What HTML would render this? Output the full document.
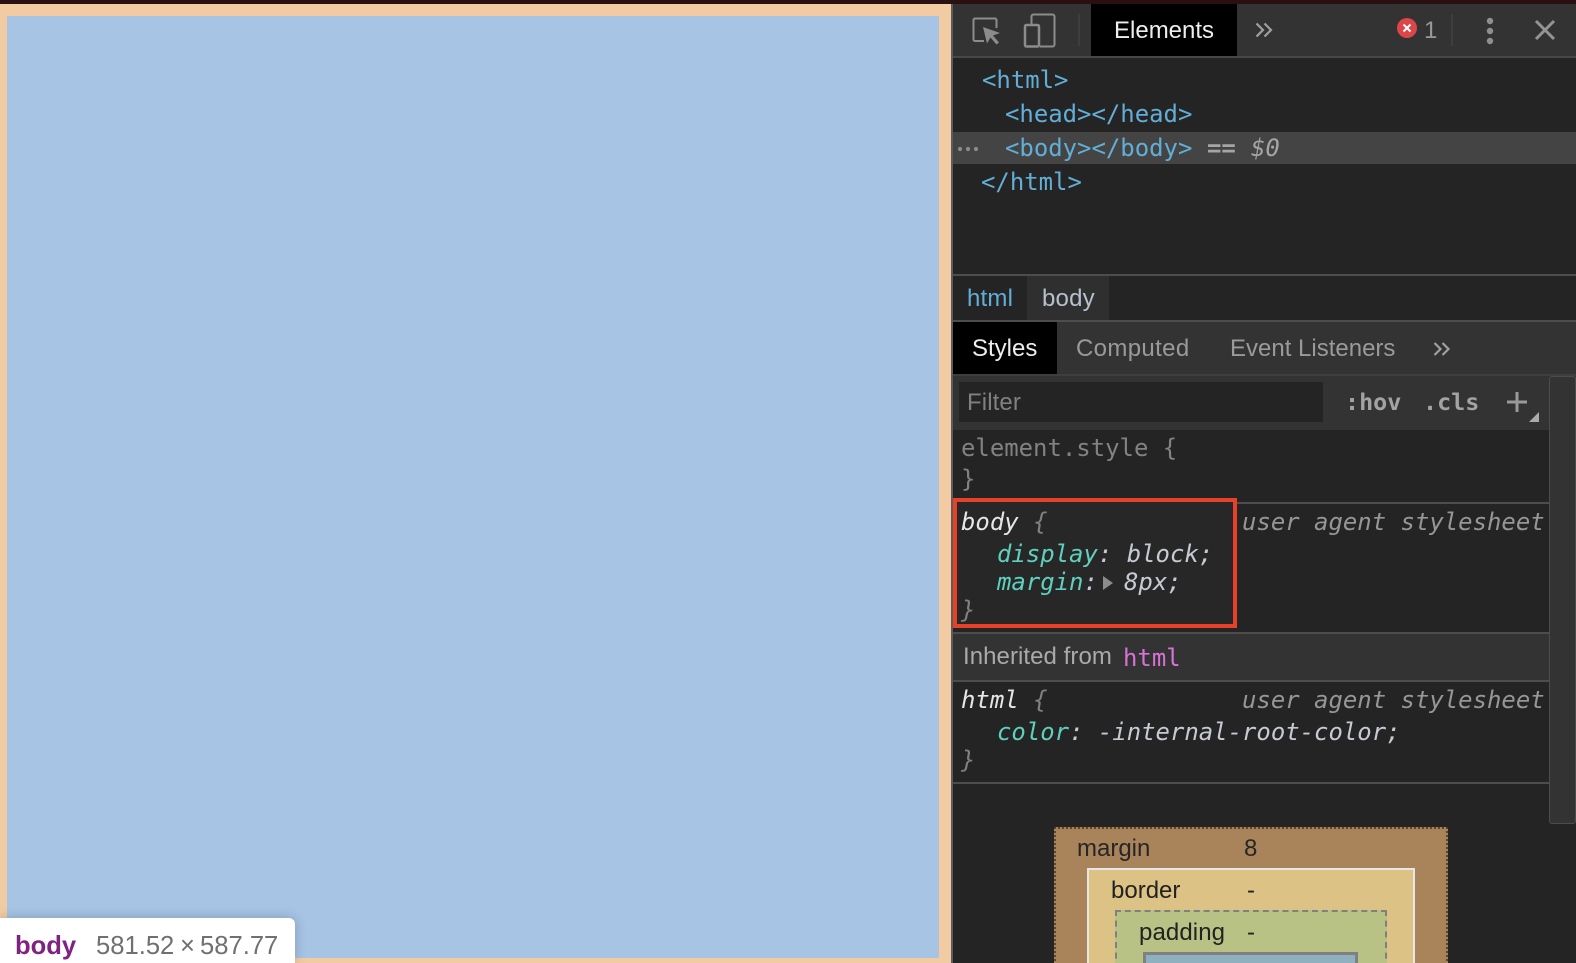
<!DOCTYPE html>
<html style="overflow:hidden;width:1576px;height:963px"><head><meta charset="utf-8"><style>
html,body{margin:0;padding:0}
body{width:1576px;height:963px;overflow:hidden;background:#f3cba3}
#r{position:absolute;left:0;top:0;width:1576px;height:963px;overflow:hidden;background:#f3cba3}
#r div,#r svg{position:absolute}
.t{position:absolute;white-space:pre;line-height:30px;height:30px;font-family:"Liberation Sans",sans-serif;font-size:24px;letter-spacing:0}
.m{font-family:"DejaVu Sans Mono","Liberation Mono",monospace;font-size:23.95px}
.i{font-style:italic}
.tag{color:#62aed6}
.g{color:#8a8a8a}
.v{color:#c6cbd3}
.p{color:#5fd0bd}
.ln{background:#4d4d4d;height:2px;left:953px;right:0}
</style></head><body><div id="r">
<div style="left:0;top:0;width:1576px;height:4px;background:#2b1013"></div>
<div style="left:7px;top:16px;width:932px;height:942px;background:#a7c4e5"></div>

<div style="left:951px;top:4px;width:625px;height:959px;background:#242424"></div>
<div style="left:951px;top:4px;width:2px;height:959px;background:#5c5c5c"></div>

<div style="left:953px;top:4px;right:0;height:53px;background:#333"></div>
<div class="ln" style="top:56px;height:2px;background:#474747"></div>
<div style="left:1091px;top:4px;width:146px;height:52px;background:#000"></div>
<span class="t" style="left:1114px;top:16px;color:#eee">Elements</span>
<svg style="left:970px;top:14px" width="36" height="34" viewBox="0 0 36 34" fill="none"><path d="M14 27H5a1.500 1.500 0 0 1-1.500-1.500V6A1.500 1.500 0 0 1 5 4.500h20A1.500 1.500 0 0 1 26.500 6v8" stroke="#8c8c8c" stroke-width="2"/><path d="M13 13l17 6-7 2.500 6 7-2.500 2-6-7-3.500 6z" fill="#8c8c8c"/></svg>
<svg style="left:1023px;top:13px" width="34" height="35" viewBox="0 0 34 35" fill="none"><path d="M8.500 11V3.500a2 2 0 0 1 2-2h19a2 2 0 0 1 2 2v28a2 2 0 0 1-2 2H17" stroke="#8c8c8c" stroke-width="2"/><rect x="2" y="12" width="14" height="21.500" rx="1.500" stroke="#8c8c8c" stroke-width="2.500"/></svg>
<div style="left:1078px;top:14px;width:2px;height:32px;background:#3e3e3e"></div>
<svg style="left:1255px;top:21px" width="19" height="18" viewBox="0 0 19 18" fill="none" stroke="#a0a0a0" stroke-width="2.200"><path d="M1.500 2.500l6.500 6.500-6.500 6.500M9.500 2.500l6.500 6.500-6.500 6.500"/></svg>
<svg style="left:1396px;top:17px" width="22" height="22" viewBox="0 0 22 22"><circle cx="11" cy="11" r="10" fill="#dc4649"/><path d="M7.500 7.500l7 7M14.500 7.500l-7 7" stroke="#fff" stroke-width="2"/></svg>
<span class="t" style="left:1424px;top:16px;color:#999">1</span>
<div style="left:1451px;top:14px;width:2px;height:32px;background:#3e3e3e"></div>
<svg style="left:1483px;top:17px" width="14" height="28" viewBox="0 0 14 28" fill="#8f8f8f"><circle cx="7" cy="4" r="3.200"/><circle cx="7" cy="14" r="3.200"/><circle cx="7" cy="24" r="3.200"/></svg>
<svg style="left:1534px;top:19px" width="22" height="22" viewBox="0 0 22 22" fill="none" stroke="#949494" stroke-width="3"><path d="M2 2l18 18M20 2L2 20"/></svg>

<div style="left:953px;top:132px;right:0;height:32px;background:#444"></div>
<span class="t m tag" style="left:982px;top:65px">&lt;html&gt;</span>
<span class="t m tag" style="left:1005px;top:99px">&lt;head&gt;&lt;/head&gt;</span>
<span class="t m tag" style="left:1005px;top:133px">&lt;body&gt;&lt;/body&gt;</span>
<span class="t m g" style="left:1207px;top:133px;color:#a5a5a5;font-weight:bold">==</span>
<span class="t m i" style="left:1251px;top:133px;color:#a5a5a5">$0</span>
<svg style="left:957px;top:145px" width="22" height="8" viewBox="0 0 22 8" fill="#8c8c8c"><circle cx="3" cy="4" r="2.100"/><circle cx="11" cy="4" r="2.100"/><circle cx="19" cy="4" r="2.100"/></svg>
<span class="t m tag" style="left:981px;top:167px">&lt;/html&gt;</span>

<div class="ln" style="top:274px"></div>
<div style="left:1027px;top:276px;width:82px;height:44px;background:#2f2f2f"></div>
<span class="t tag" style="left:967px;top:284px;letter-spacing:.2px">html</span>
<span class="t" style="left:1042px;top:284px;color:#b6c0ce;letter-spacing:.2px">body</span>
<div class="ln" style="top:320px"></div>

<div style="left:953px;top:322px;right:0;height:108px;background:#333"></div>
<div style="left:953px;top:322px;width:104px;height:52px;background:#000"></div>
<div class="ln" style="top:374px;height:2px;background:#3e3e3e"></div>
<span class="t" style="left:972px;top:334px;color:#eee">Styles</span>
<span class="t" style="left:1076px;top:334px;color:#9a9a9a;letter-spacing:.35px">Computed</span>
<span class="t" style="left:1230px;top:334px;color:#9a9a9a">Event Listeners</span>
<svg style="left:1433px;top:340px" width="18" height="18" viewBox="0 0 18 18" fill="none" stroke="#a0a0a0" stroke-width="2.200"><path d="M1.500 3l6 6-6 6M9.500 3l6 6-6 6"/></svg>
<div style="left:959px;top:382px;width:364px;height:40px;background:#242424"></div>
<span class="t" style="left:967px;top:388px;color:#808080;letter-spacing:.1px">Filter</span>
<span class="t m" style="left:1345px;top:387px;color:#a3a3a3;font-weight:bold;font-size:23.4px">:hov</span>
<span class="t m" style="left:1423px;top:387px;color:#a3a3a3;font-weight:bold;font-size:23.4px">.cls</span>
<svg style="left:1506px;top:391px" width="22" height="22" viewBox="0 0 22 22"><path d="M11 1v20M1 11h20" stroke="#999" stroke-width="3"/></svg>
<svg style="left:1529px;top:412px" width="10" height="10" viewBox="0 0 10 10"><path d="M10 0v10H0z" fill="#aaa"/></svg>

<div style="left:1549px;top:376px;width:27px;height:448px;background:#333;border:1px solid #4c4c4c;box-sizing:border-box;border-radius:3px"></div>

<span class="t m" style="left:961px;top:433px;color:#828282">element.style {</span>
<span class="t m" style="left:961px;top:464px;color:#828282">}</span>
<div style="left:953px;top:502px;width:596px;height:2px;background:#4d4d4d"></div>

<div style="left:953px;top:498px;width:284px;height:130px;box-sizing:border-box;border:4px solid #e8412a;background:#272727"></div>
<span class="t m i" style="left:961px;top:507px;color:#e6e6e6">body <span style="color:#808080">{</span></span>
<span class="t m i" style="left:997px;top:539px"><span class="p">display</span><span class="v">: block;</span></span>
<span class="t m i p" style="left:997px;top:567px">margin<span class="v">:</span></span>
<svg style="left:1103px;top:576px" width="10" height="14" viewBox="0 0 10 14"><path d="M0 0l10 7-10 7z" fill="#8c8c8c"/></svg>
<span class="t m i v" style="left:1124px;top:567px">8px;</span>
<span class="t m i" style="left:961px;top:595px;color:#808080">}</span>
<span class="t m i" style="left:1242px;top:507px;color:#969696">user agent stylesheet</span>

<div style="left:953px;top:632px;width:596px;height:50px;background:#333;border-top:2px solid #4d4d4d;border-bottom:2px solid #4d4d4d;box-sizing:border-box"></div>
<span class="t" style="left:963px;top:642px;color:#aaa;letter-spacing:.06px">Inherited from</span>
<span class="t m" style="left:1123px;top:643px;color:#d872d8">html</span>

<span class="t m i" style="left:961px;top:685px;color:#e6e6e6">html <span style="color:#808080">{</span></span>
<span class="t m i" style="left:1242px;top:685px;color:#969696">user agent stylesheet</span>
<span class="t m i" style="left:997px;top:717px"><span class="p">color</span><span class="v">: -internal-root-color;</span></span>
<span class="t m i" style="left:961px;top:745px;color:#808080">}</span>
<div style="left:953px;top:782px;width:596px;height:2px;background:#4d4d4d"></div>

<div style="left:1054px;top:827px;width:394px;height:150px;box-sizing:border-box;border:2px dotted #5e4528;background:#a9845a;border-radius:2px"></div>
<div style="left:1087px;top:868px;width:328px;height:110px;box-sizing:border-box;border:2px solid #e6e6e6;background:#dcc385"></div>
<div style="left:1115px;top:910px;width:272px;height:70px;box-sizing:border-box;border:2px dashed #808080;background:#b9c285"></div>
<div style="left:1143px;top:952px;width:215px;height:30px;box-sizing:border-box;border:3px solid #808080;background:#8fb0bf"></div>
<span class="t" style="left:1077px;top:834px;color:#262626">margin</span>
<span class="t" style="left:1244px;top:834px;color:#262626">8</span>
<span class="t" style="left:1111px;top:876px;color:#222">border</span>
<span class="t" style="left:1247px;top:876px;color:#222">-</span>
<span class="t" style="left:1139px;top:918px;color:#222;letter-spacing:.1px">padding</span>
<span class="t" style="left:1247px;top:918px;color:#222">-</span>

<div style="left:0;top:918px;width:295px;height:45px;background:#fff;border-radius:0 6px 0 0;box-shadow:0 0 12px rgba(0,0,0,.22)"></div>
<span class="t" style="left:15px;top:931px;color:#7f2282;font-weight:bold;font-size:25.6px">body</span>
<span class="t" style="left:96px;top:931px;color:#707070;font-size:25.6px">581.52</span>
<span class="t" style="left:180px;top:931px;color:#707070;font-size:25.6px">×</span>
<span class="t" style="left:200px;top:931px;color:#707070;font-size:25.6px">587.77</span>
</div></body></html>
